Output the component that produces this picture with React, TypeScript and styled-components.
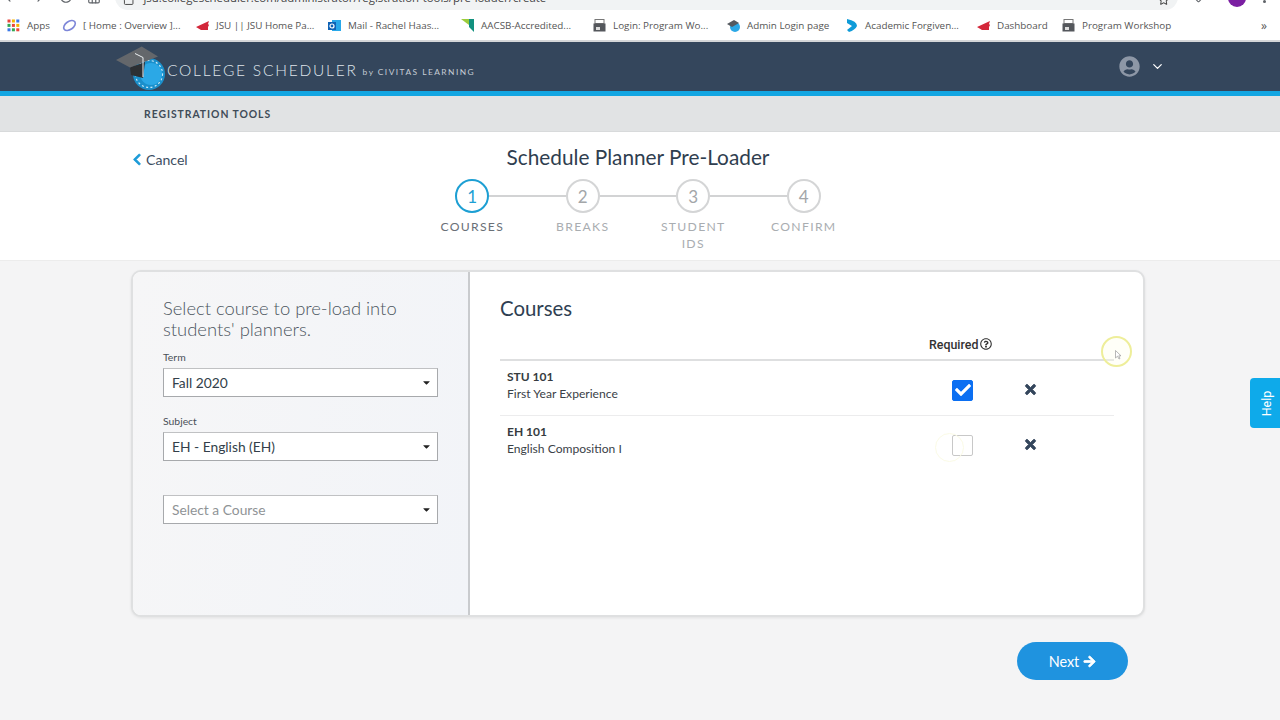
import React from "react";
import styled, { createGlobalStyle } from "styled-components";
import { FaUserCircle, FaTimes, FaCheck, FaArrowRight, FaChevronLeft, FaRegQuestionCircle, FaCaretDown, FaRegStar, FaRegHeart } from "react-icons/fa";
import { FiChevronDown, FiArrowLeft, FiArrowRight, FiRotateCw, FiHome, FiLock } from "react-icons/fi";

const GlobalStyle = createGlobalStyle`
  html, body {
    margin: 0;
    padding: 0;
    background: #f4f4f5;
    font-family: Lato, "Liberation Sans", sans-serif;
    overflow: hidden;
  }
`;

const Page = styled.div`
  position: relative;
  width: 1280px;
  height: 720px;
  overflow: hidden;
`;

/* browser chrome */
const TopStrip = styled.div`
  height: 10px;
  background: #fff;
  overflow: hidden;
  display: flex;
  align-items: flex-end;
  color: #5f6368;
`;

const StripIcons = styled.div`
  width: 115px;
  height: 14px;
  margin-bottom: 6px;
  flex: none;
  display: flex;
  align-items: flex-start;
  gap: 14px;
  padding-left: 3px;
  box-sizing: border-box;
  font-size: 14px;
`;

const AddressBar = styled.div`
  width: 1063px;
  height: 26px;
  flex: none;
  background: #f1f3f4;
  border-radius: 0 0 13px 13px;
  display: flex;
  align-items: flex-end;
  padding: 0 9px 5px 8px;
  box-sizing: border-box;
  font-family: "Open Sans", sans-serif;
  font-size: 11.4px;
  line-height: 14px;
  color: #444;
  gap: 9px;
`;

const Url = styled.span`
  flex: 1;
  white-space: nowrap;
`;

const StripRight = styled.div`
  flex: 1;
  height: 14px;
  margin-bottom: 4px;
  display: flex;
  align-items: flex-start;
  padding-left: 15px;
  font-size: 11px;
  gap: 24px;
`;

const Avatar = styled.span`
  width: 18px;
  height: 18px;
  margin-top: -3px;
  border-radius: 50%;
  background: #7b1fa2;
  flex: none;
`;

const MenuDot = styled.span`
  width: 3px;
  height: 3px;
  margin-top: 8px;
  margin-left: -7px;
  border-radius: 50%;
  background: #5f6368;
  flex: none;
`;

const Bookmarks = styled.div`
  height: 30px;
  background: #fff;
  border-bottom: 2px solid #d4d6d8;
  display: flex;
  align-items: center;
  padding-left: 6px;
  font-family: "Open Sans", sans-serif;
  font-size: 9.85px;
  color: #555;
`;

const Bookmark = styled.div<{ $w: number }>`
  width: ${(p) => p.$w}px;
  flex: none;
  display: flex;
  align-items: center;
  gap: 6px;
  white-space: nowrap;
  svg {
    width: 15px;
    height: 15px;
    flex: none;
  }
`;

const More = styled.span`
  margin-left: auto;
  margin-right: 13px;
  font-size: 12px;
`;

/* site header */
const Nav = styled.header`
  height: 49px;
  background: #34465c;
  border-bottom: 5px solid #12a6e2;
  display: flex;
  align-items: center;
  padding-left: 113px;
  padding-right: 115px;
`;

const Brand = styled.div`
  display: flex;
  align-items: center;
`;

const BrandName = styled.span`
  margin-top: 7px;
  font-size: 15.5px;
  font-weight: 300;
  letter-spacing: 1.78px;
  color: #dfe4ea;
  white-space: nowrap;
`;

const BrandSub = styled.span`
  margin-left: 5px;
  margin-top: 10px;
  font-size: 8.4px;
  letter-spacing: 1.46px;
  color: #c5ccd4;
  white-space: nowrap;
`;

const UserMenu = styled.div`
  margin-left: auto;
  display: flex;
  align-items: center;
  gap: 10px;
  color: #fff;
  font-size: 15px;
  svg:first-child {
    color: #8d97a6;
    font-size: 21px;
  }
`;

const SubNav = styled.nav`
  height: 35px;
  background: #e1e3e4;
  border-bottom: 1px solid #d8dadb;
  display: flex;
  align-items: center;
  padding-left: 144px;
  font-size: 10.4px;
  font-weight: 700;
  letter-spacing: 0.95px;
  color: #3f4c58;
`;

const Container = styled.div`
  width: 1014px;
  margin-left: 131px;
`;

const StepHeader = styled.section`
  height: 128px;
  background: #fff;
  border-bottom: 1px solid #ececec;
`;

const HeaderGrid = styled(Container)`
  display: grid;
  grid-template-columns: 1fr 442px 1fr;
`;

const CancelLink = styled.a`
  display: flex;
  align-items: center;
  align-self: start;
  gap: 4px;
  margin-top: 18px;
  height: 18px;
  font-size: 14.1px;
  color: #3d4e62;
  padding-left: 1px;
  svg {
    color: #1c9bd8;
    font-size: 13px;
    width: 10px;
    stroke: currentColor;
    stroke-width: 30;
  }
`;

const HeaderCenter = styled.div`
  text-align: center;
`;

const PageTitle = styled.h1`
  margin: 12px 0 0;
  font-size: 20.8px;
  line-height: 25px;
  font-weight: 400;
  color: #2f3e4f;
  white-space: nowrap;
`;

const Steps = styled.ol`
  list-style: none;
  margin: 10px 0 0;
  padding: 0;
  display: grid;
  grid-template-columns: repeat(4, 1fr);
`;

const Step = styled.li<{ $active?: boolean }>`
  position: relative;
  display: flex;
  flex-direction: column;
  align-items: center;
  color: ${(p) => (p.$active ? "#6a7077" : "#a9adb1")};
  &:not(:last-child)::after {
    content: "";
    position: absolute;
    top: 16px;
    left: calc(50% + 17px);
    width: calc(100% - 34px);
    height: 2px;
    background: #d2d3d4;
  }
`;

const StepCircle = styled.span<{ $active?: boolean }>`
  width: 34px;
  height: 34px;
  box-sizing: border-box;
  border-radius: 50%;
  border: 2px solid ${(p) => (p.$active ? "#1d9fd3" : "#d4d5d6")};
  display: flex;
  align-items: center;
  justify-content: center;
  font-size: 17px;
  color: ${(p) => (p.$active ? "#1d9fd3" : "#a3a6a9")};
`;

const StepLabel = styled.span`
  margin-top: 5px;
  width: 84px;
  font-size: 12.2px;
  line-height: 17px;
  letter-spacing: 1.3px;
  text-transform: uppercase;
`;

const Body = styled.main`
  padding-top: 9px;
`;

const Card = styled(Container)`
  height: 347px;
  box-sizing: border-box;
  border: 2px solid #dfe0e1;
  border-radius: 10px;
  background: #fff;
  box-shadow: 0 1px 3px rgba(0, 0, 0, 0.08);
  display: flex;
  overflow: hidden;
`;

const Sidebar = styled.aside`
  width: 337px;
  flex: none;
  box-sizing: border-box;
  border-right: 2px solid #c9cbce;
  background: linear-gradient(100deg, #f6f6f7, #f2f4f8);
  padding: 26px 0 0 30px;
`;

const SidebarTitle = styled.h2`
  margin: 0 0 11px;
  width: 270px;
  font-size: 18.4px;
  line-height: 21px;
  font-weight: 300;
  color: #4c5560;
`;

const FieldLabel = styled.label`
  display: block;
  height: 12px;
  margin-bottom: 5px;
  font-size: 10.4px;
  line-height: 12px;
  color: #4a5058;
`;

const Field = styled.div<{ $gap?: number }>`
  margin-bottom: ${(p) => p.$gap ?? 18}px;
`;

const Select = styled.div<{ $placeholder?: boolean }>`
  width: 275px;
  height: 29px;
  box-sizing: border-box;
  background: #fff;
  border: 1px solid #a7a9ac;
  border-top-color: #c0c1c3;
  display: flex;
  align-items: center;
  justify-content: space-between;
  padding: 0 5px 0 8px;
  font-size: 13.8px;
  color: ${(p) => (p.$placeholder ? "#8f9396" : "#333f4a")};
  svg {
    color: #222;
    font-size: 11px;
  }
`;

const Content = styled.section`
  flex: 1;
  padding: 23px 29px 0 30px;
`;

const ContentTitle = styled.h2`
  margin: 0;
  font-size: 20.4px;
  line-height: 26px;
  font-weight: 400;
  color: #2f3f52;
`;

const TableHead = styled.div`
  margin-top: 16px;
  height: 24px;
  box-sizing: border-box;
  border-bottom: 2px solid #dedfe0;
  padding-left: 429px;
  display: flex;
  align-items: flex-start;
  gap: 2px;
  font-family: Roboto, sans-serif;
  font-size: 12.4px;
  line-height: 15px;
  font-weight: 500;
  color: #333;
  svg {
    font-size: 12px;
    margin-top: 1px;
  }
`;

const CourseRow = styled.div<{ $last?: boolean }>`
  height: 55px;
  box-sizing: border-box;
  border-bottom: ${(p) => (p.$last ? "none" : "1px solid #ececed")};
  display: flex;
  align-items: center;
  padding-left: 7px;
`;

const CourseInfo = styled.div`
  width: 445px;
  flex: none;
  padding-bottom: 7px;
`;

const CourseCode = styled.div`
  font-size: 12px;
  line-height: 17px;
  font-weight: 700;
  color: #363b40;
`;

const CourseName = styled.div`
  font-size: 12.1px;
  line-height: 17px;
  color: #3a4147;
`;

const Checkbox = styled.span<{ $checked?: boolean }>`
  width: 21px;
  height: 21px;
  margin-top: 4px;
  box-sizing: border-box;
  flex: none;
  border-radius: 2px;
  border: 1px solid ${(p) => (p.$checked ? "#0b6ff2" : "#c8c8c8")};
  background: ${(p) => (p.$checked ? "#0b6ff2" : "#fff")};
  color: #fff;
  display: flex;
  align-items: center;
  justify-content: center;
  font-size: 16px;
`;

const RemoveButton = styled.span`
  margin-left: 50px;
  margin-top: 2px;
  color: #34465c;
  font-size: 15px;
  display: flex;
  svg {
    stroke: currentColor;
    stroke-width: 25;
  }
`;

const Footer = styled(Container)`
  display: flex;
  justify-content: flex-end;
  padding: 25px 17px 0 0;
  box-sizing: border-box;
`;

const NextButton = styled.button`
  width: 111px;
  height: 38px;
  padding: 0;
  border: none;
  border-radius: 19px;
  background: #1f93df;
  color: #fff;
  font-family: Lato, sans-serif;
  font-size: 14.4px;
  display: flex;
  align-items: center;
  justify-content: center;
  gap: 4px;
  svg {
    font-size: 13px;
    stroke: currentColor;
    stroke-width: 30;
  }
`;

const HelpTab = styled.div`
  position: absolute;
  right: 0;
  top: 378px;
  width: 30px;
  height: 50px;
  padding-left: 4px;
  box-sizing: border-box;
  background: #0eaaea;
  border-radius: 4px 0 0 4px;
  display: flex;
  align-items: center;
  justify-content: center;
  color: #fff;
  font-family: Roboto, sans-serif;
  font-size: 12.5px;
  span {
    transform: rotate(-90deg);
    display: block;
  }
`;

const CursorRing = styled.div`
  position: absolute;
  left: 1101px;
  top: 336px;
  width: 31px;
  height: 31px;
  box-sizing: border-box;
  border: 2px solid #eeee9a;
  border-radius: 50%;
  background: rgba(255, 255, 235, 0.35);
`;

const ClickTrace = styled.div`
  position: absolute;
  left: 935px;
  top: 433px;
  width: 29px;
  height: 29px;
  box-sizing: border-box;
  border: 1px solid #fbfbe6;
  border-radius: 50%;
`;

const CursorMark = styled.svg`
  position: absolute;
  left: 1115px;
  top: 350px;
`;

const Logo = () => (
  <svg width="54" height="46" viewBox="0 0 54 46">
    <circle cx="36" cy="30" r="16" fill="#1a8fcb" />
    <circle cx="36" cy="30" r="13.5" fill="none" stroke="#cbeaf8" strokeWidth="1.2" strokeDasharray="2 2.4" />
    <circle cx="38" cy="30" r="11" fill="#2ba8e6" />
    <path d="M17 23.5 L18 31 L30 34 L32 18 Z" fill="#2c2f33" />
    <path d="M3 16 L28.7 2.5 L45 12.5 L17 23.5 Z" fill="#64676b" />
    <path d="M22 9.5 L30 13.5 V33" fill="none" stroke="#eef2f4" strokeWidth="1" />
  </svg>
);

const AppsGrid = () => (
  <svg viewBox="0 0 15 15">
    {[0, 1, 2].flatMap((r) =>
      [0, 1, 2].map((c) => (
        <rect
          key={`${r}-${c}`}
          x={1.5 + c * 4.4}
          y={1.5 + r * 4.4}
          width="3"
          height="3"
          fill={["#e8453c", "#f4b400", "#3b78e7", "#34a853", "#e8453c", "#f4b400", "#3b78e7", "#34a853", "#e8453c"][r * 3 + c]}
        />
      ))
    )}
  </svg>
);

const SwirlIcon = () => (
  <svg viewBox="0 0 15 15">
    <ellipse cx="7.5" cy="7.5" rx="6.5" ry="4" fill="none" stroke="#7d86d8" strokeWidth="1.6" transform="rotate(-35 7.5 7.5)" />
  </svg>
);

const WingIcon = () => (
  <svg viewBox="0 0 15 15">
    <path d="M1 9 L14 3 L13 6 L14 7 L13 9 L13 12 L6 12 Z" fill="#d3273a" />
  </svg>
);

const OutlookIcon = () => (
  <svg viewBox="0 0 15 15">
    <rect x="5" y="2" width="9" height="11" fill="#28a8ea" />
    <rect x="1" y="4" width="8" height="8" fill="#0f62b5" />
    <circle cx="5" cy="8" r="2" fill="none" stroke="#fff" strokeWidth="1.2" />
  </svg>
);

const AacsbIcon = () => (
  <svg viewBox="0 0 15 15">
    <path d="M1 1 H9 V7 Z" fill="#9ccc3c" />
    <path d="M9 1 H14 V14 L9 9 Z" fill="#12917f" />
  </svg>
);

const PrinterIcon = () => (
  <svg viewBox="0 0 15 15">
    <rect x="3" y="1.5" width="9" height="4" fill="#fff" stroke="#777" />
    <rect x="1.5" y="5.5" width="12" height="8" fill="#54575c" />
    <rect x="4" y="9" width="4" height="3" fill="#ddd" />
  </svg>
);

const CapIcon = () => (
  <svg viewBox="0 0 15 15">
    <circle cx="9" cy="9" r="5" fill="#2ba8e6" />
    <path d="M1 6 L8 2 L13 5 L6 9 Z" fill="#555a60" />
  </svg>
);

const ArcIcon = () => (
  <svg viewBox="0 0 15 15">
    <path d="M3 1 Q13 3 13 8 Q11 12 5 14 L3 12 L8 8 L3 5 Z" fill="#0f9bd8" />
  </svg>
);

const bookmarks: { icon: React.ReactNode; label: string; w: number }[] = [
  { icon: <AppsGrid />, label: "Apps", w: 56 },
  { icon: <SwirlIcon />, label: "[ Home : Overview ]...", w: 133 },
  { icon: <WingIcon />, label: "JSU || JSU Home Pa...", w: 132 },
  { icon: <OutlookIcon />, label: "Mail - Rachel Haas...", w: 133 },
  { icon: <AacsbIcon />, label: "AACSB-Accredited...", w: 132 },
  { icon: <PrinterIcon />, label: "Login: Program Wo...", w: 134 },
  { icon: <CapIcon />, label: "Admin Login page", w: 118 },
  { icon: <ArcIcon />, label: "Academic Forgiven...", w: 132 },
  { icon: <WingIcon />, label: "Dashboard", w: 85 },
  { icon: <PrinterIcon />, label: "Program Workshop", w: 120 },
];

const steps = [
  { n: 1, label: "Courses", active: true },
  { n: 2, label: "Breaks" },
  { n: 3, label: "Student IDs" },
  { n: 4, label: "Confirm" },
];

const courses = [
  { code: "STU 101", name: "First Year Experience", required: true },
  { code: "EH 101", name: "English Composition I", required: false },
];

export default function App() {
  return (
    <Page>
      <GlobalStyle />
      <TopStrip>
        <StripIcons>
          <FiArrowLeft />
          <FiArrowRight />
          <FiRotateCw />
          <FiHome />
        </StripIcons>
        <AddressBar>
          <FiLock />
          <Url>jsu.collegescheduler.com/administrator/registration-tools/pre-loader/create</Url>
          <FaRegStar />
        </AddressBar>
        <StripRight>
          <FaRegHeart />
          <Avatar />
          <MenuDot />
        </StripRight>
      </TopStrip>
      <Bookmarks>
        {bookmarks.map((b) => (
          <Bookmark key={b.label} $w={b.w}>
            {b.icon}
            {b.label}
          </Bookmark>
        ))}
        <More>»</More>
      </Bookmarks>
      <Nav>
        <Brand>
          <Logo />
          <BrandName>COLLEGE SCHEDULER</BrandName>
          <BrandSub>by CIVITAS LEARNING</BrandSub>
        </Brand>
        <UserMenu>
          <FaUserCircle />
          <FiChevronDown />
        </UserMenu>
      </Nav>
      <SubNav>REGISTRATION TOOLS</SubNav>
      <StepHeader>
        <HeaderGrid>
          <CancelLink>
            <FaChevronLeft />
            Cancel
          </CancelLink>
          <HeaderCenter>
            <PageTitle>Schedule Planner Pre-Loader</PageTitle>
            <Steps>
              {steps.map((s) => (
                <Step key={s.n} $active={s.active}>
                  <StepCircle $active={s.active}>{s.n}</StepCircle>
                  <StepLabel>{s.label}</StepLabel>
                </Step>
              ))}
            </Steps>
          </HeaderCenter>
        </HeaderGrid>
      </StepHeader>
      <Body>
        <Card>
          <Sidebar>
            <SidebarTitle>Select course to pre-load into students' planners.</SidebarTitle>
            <Field>
              <FieldLabel>Term</FieldLabel>
              <Select>
                Fall 2020
                <FaCaretDown />
              </Select>
            </Field>
            <Field $gap={34}>
              <FieldLabel>Subject</FieldLabel>
              <Select>
                EH - English (EH)
                <FaCaretDown />
              </Select>
            </Field>
            <Select $placeholder>
              Select a Course
              <FaCaretDown />
            </Select>
          </Sidebar>
          <Content>
            <ContentTitle>Courses</ContentTitle>
            <TableHead>
              Required <FaRegQuestionCircle />
            </TableHead>
            {courses.map((c, i) => (
              <CourseRow key={c.code} $last={i === courses.length - 1}>
                <CourseInfo>
                  <CourseCode>{c.code}</CourseCode>
                  <CourseName>{c.name}</CourseName>
                </CourseInfo>
                <Checkbox $checked={c.required}>{c.required && <FaCheck />}</Checkbox>
                <RemoveButton>
                  <FaTimes />
                </RemoveButton>
              </CourseRow>
            ))}
          </Content>
        </Card>
        <Footer>
          <NextButton>
            Next <FaArrowRight />
          </NextButton>
        </Footer>
      </Body>
      <HelpTab>
        <span>Help</span>
      </HelpTab>
      <ClickTrace />
      <CursorRing />
      <CursorMark width="7" height="10" viewBox="0 0 7 10">
        <path d="M0.5 0.5 V8 L2.5 6.2 L4 9 L5 8.5 L3.8 5.8 H6 Z" fill="#fff" stroke="#999" strokeWidth="0.7" />
      </CursorMark>
    </Page>
  );
}
